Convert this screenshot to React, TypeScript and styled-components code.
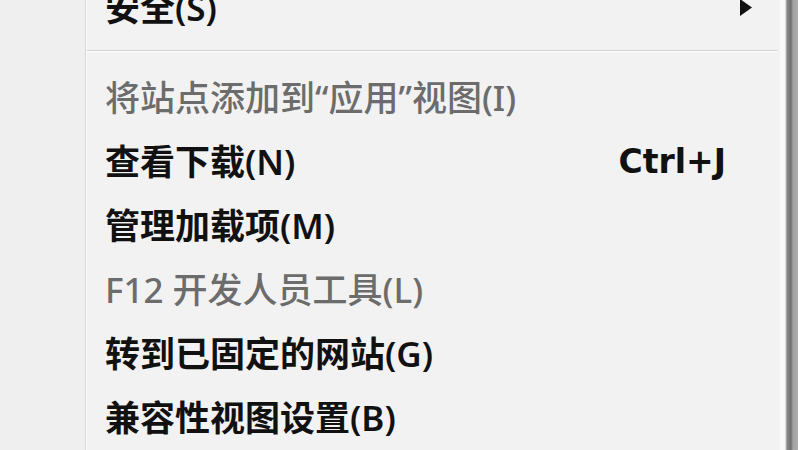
import { FC } from 'react';
import styled, { createGlobalStyle } from 'styled-components';

const GlobalStyle = createGlobalStyle`
    html,
    body {
        margin: 0;
        padding: 0;
        height: 100%;
        overflow: hidden;
        background-color: #efefef;
    }
`;

const Page = styled.div`
    display: flex;
    width: 798px;
    height: 450px;
    overflow: hidden;
    font-family: 'Noto Sans', 'Noto Sans CJK SC', sans-serif;
`;

const Gutter = styled.div`
    width: 85px;
    flex-shrink: 0;
    background-color: #efefef;
    border-right: 1px solid #d6d6d6;
    box-shadow: 1px 0 0 #fbfbfb;
`;

const Menu = styled.ul`
    flex: 1;
    list-style: none;
    margin: -25px 0 0 1px;
    padding: 0;
    background-color: #f2f2f3;
    display: flex;
    flex-direction: column;
`;

const Edge = styled.div`
    width: 18px;
    flex-shrink: 0;
    background: linear-gradient(
        to right,
        #f9f9f9 0,
        #f9f9f9 5px,
        #8a8a8a 7px,
        #6f6f6f 11px,
        #a3a3a3 13px,
        #acacac 18px
    );
`;

const Row = styled.li<{ $disabled?: boolean }>`
    display: grid;
    grid-template-columns: 1fr auto 40px;
    align-items: center;
    height: 64px;
    flex-shrink: 0;
    padding: 0 14px 0 18px;
    font-size: 35px;
    font-weight: ${(p) => (p.$disabled ? 500 : 600)};
    color: ${(p) => (p.$disabled ? '#6c6c6c' : '#111111')};
    white-space: nowrap;
`;

const Label = styled.span`
    line-height: 1;
`;

const Shortcut = styled.span`
    font-family: 'DejaVu Sans', 'Noto Sans', sans-serif;
    font-size: 33px;
    line-height: 1;
`;

const ArrowCell = styled.span`
    display: flex;
    justify-content: center;
    svg {
        display: block;
    }
`;

const Separator = styled.li`
    height: 1px;
    margin: 11px 2px 13px 0;
    background-color: #d3d3d3;
    border-bottom: 1px solid #fdfdfd;
    flex-shrink: 0;
`;

type Item = {
    label: string;
    shortcut?: string;
    disabled?: boolean;
    submenu?: boolean;
};

const topItems: Item[] = [{ label: '安全(S)', submenu: true }];

const items: Item[] = [
    { label: '将站点添加到“应用”视图(I)', disabled: true },
    { label: '查看下载(N)', shortcut: 'Ctrl+J' },
    { label: '管理加载项(M)' },
    { label: 'F12 开发人员工具(L)', disabled: true },
    { label: '转到已固定的网站(G)' },
    { label: '兼容性视图设置(B)' },
];

const MenuRow: FC<{ item: Item }> = ({ item }) => (
    <Row $disabled={item.disabled}>
        <Label>{item.label}</Label>
        <Shortcut>{item.shortcut}</Shortcut>
        <ArrowCell>
            {item.submenu && (
                <svg width="12" height="17" viewBox="0 0 12 17">
                    <polygon points="0,0 12,8.5 0,17" fill="#111" />
                </svg>
            )}
        </ArrowCell>
    </Row>
);

const App: FC = () => {
    return (
        <>
            <GlobalStyle />
            <Page>
                <Gutter />
                <Menu>
                    {topItems.map((item) => (
                        <MenuRow key={item.label} item={item} />
                    ))}
                    <Separator />
                    {items.map((item) => (
                        <MenuRow key={item.label} item={item} />
                    ))}
                </Menu>
                <Edge />
            </Page>
        </>
    );
};

export default App;
